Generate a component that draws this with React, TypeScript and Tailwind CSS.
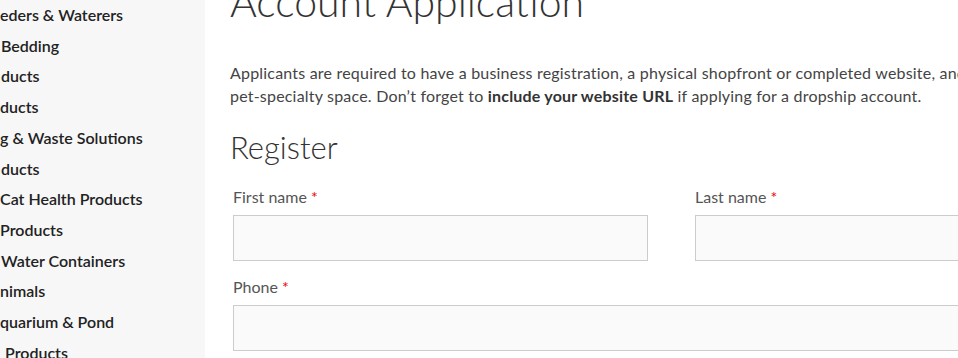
import React from "react";

const CATEGORIES: { label: string; pad: string }[] = [
  { label: "eders & Waterers", pad: "pl-0" },
  { label: "Bedding", pad: "pl-[1px]" },
  { label: "ducts", pad: "pl-[1px]" },
  { label: "ducts", pad: "pl-0" },
  { label: "g & Waste Solutions", pad: "pl-0" },
  { label: "ducts", pad: "pl-[1px]" },
  { label: "Cat Health Products", pad: "pl-0" },
  { label: "Products", pad: "pl-0" },
  { label: "Water Containers", pad: "pl-[1px]" },
  { label: "nimals", pad: "pl-0" },
  { label: "quarium & Pond", pad: "pl-0" },
  { label: "Products", pad: "pl-[5px]" },
];

function Field({ label, className }: { label: string; className?: string }) {
  return (
    <div className={className}>
      <label className="block text-[16px] leading-[20px] text-[#555] pl-[3px]">
        {label} <span className="text-[#e00]">*</span>
      </label>
      <div className="mt-[8px] ml-[3px] h-[46px] border border-[#ccc] bg-[#fafafa]" />
    </div>
  );
}

export default function App() {
  return (
    <div
      className="flex h-[358px] w-[958px] overflow-hidden bg-white"
      style={{ fontFamily: "Lato, 'Noto Sans', sans-serif" }}
    >
      <aside className="w-[205px] shrink-0 bg-[#f7f7f7] overflow-hidden">
        <ul>
          {CATEGORIES.map((c, i) => (
            <li
              key={i}
              className={`h-[30.73px] leading-[30.73px] whitespace-nowrap text-[16px] font-semibold text-[#222] ${c.pad}`}
            >
              {c.label}
            </li>
          ))}
        </ul>
      </aside>

      <main className="shrink-0 w-[920px] pl-[25px]">
        <h1 className="-mt-[26px] text-[41px] leading-[56px] font-light text-[#333] whitespace-nowrap">
          Account Application
        </h1>
        <p className="mt-[31px] text-[16px] leading-[23px] tracking-[0.2px] text-[#444] whitespace-nowrap">
          Applicants are required to have a business registration, a physical shopfront or completed website, and
          <br />
          pet-specialty space. Don’t forget to <strong className="font-bold text-[#333]">include your website URL</strong> if applying for a dropship account.
        </p>
        <h2 className="mt-[20px] text-[31px] leading-[40px] font-light text-[#333]">Register</h2>
        <div className="mt-[20px] flex gap-[44px]">
          <Field label="First name" className="w-[418px]" />
          <Field label="Last name" className="w-[418px]" />
        </div>
        <Field label="Phone" className="mt-[16px] w-[880px]" />
      </main>
    </div>
  );
}
